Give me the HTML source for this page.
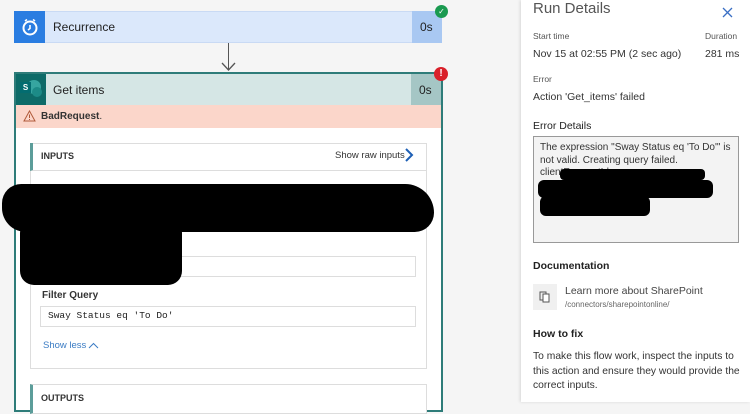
<!DOCTYPE html>
<html><head><style>
*{margin:0;padding:0;box-sizing:border-box}
body{width:750px;height:402px;overflow:hidden;background:#f5f5f5;font-family:"Liberation Sans",sans-serif;position:relative;color:#222}
.a{position:absolute}
.r{font-family:"Liberation Sans",sans-serif}
</style></head><body>
<div class="a" style="left:14px;top:11px;width:428px;height:32px;background:#dbe8fb;border:1px solid #c9daf4"></div>
<div class="a" style="left:14px;top:11px;width:31px;height:32px;background:#2a7de1"></div>
<svg class="a" style="left:20px;top:17px" width="20" height="20" viewBox="0 0 20 20"><circle cx="10" cy="11" r="6.5" fill="none" stroke="#fff" stroke-width="2"/><path d="M10 8v3.5l-2 1.5" stroke="#fff" stroke-width="1.6" fill="none"/><path d="M5 4l2-1.5M15 4l-2-1.5" stroke="#fff" stroke-width="1.6"/></svg>
<div class="a" style="left:53px;top:20px;font-size:12px">Recurrence</div>
<div class="a" style="left:412px;top:11px;width:30px;height:32px;background:#a9c8f2;font-size:12px;padding:9px 0 0 8px">0s</div>
<div class="a" style="left:435px;top:5px;width:13px;height:13px;border-radius:50%;background:#1a9a50;color:#fff;font-size:8px;text-align:center;line-height:13px">✓</div>
<div class="a" style="left:228px;top:43px;width:1px;height:27px;background:#555"></div>
<svg class="a" style="left:221px;top:62px" width="15" height="10"><path d="M1 1l6.5 7 6.5-7" stroke="#555" stroke-width="1.3" fill="none"/></svg>
<div class="a" style="left:14px;top:72px;width:429px;height:340px;background:#fff;border:2px solid #2e7c79"></div>
<div class="a" style="left:16px;top:74px;width:425px;height:31px;background:#d5e6e5"></div>
<div class="a" style="left:16px;top:74px;width:30px;height:31px;background:#0d6b68"></div>
<div class="a" style="left:27px;top:80px;width:14px;height:14px;border-radius:50%;background:#36a5a0"></div>
<div class="a" style="left:32px;top:87px;width:10px;height:10px;border-radius:50%;background:#1c8b87"></div>
<div class="a" style="left:20px;top:82px;width:11px;height:11px;background:#036c70;color:#fff;font-size:8px;font-weight:bold;text-align:center;line-height:11px">S</div>
<div class="a" style="left:53px;top:83px;font-size:12px">Get items</div>
<div class="a" style="left:411px;top:74px;width:30px;height:31px;background:#a5c6c5;font-size:12px;padding:9px 0 0 8px">0s</div>
<div class="a" style="left:434px;top:67px;width:14px;height:14px;border-radius:50%;background:#d9202a;color:#fff;font-size:10px;font-weight:bold;text-align:center;line-height:14px">!</div>
<div class="a" style="left:16px;top:105px;width:425px;height:23px;background:#fbd6ca"></div>
<svg class="a" style="left:23px;top:110px" width="13" height="12"><path d="M6.5 1L12 11H1z" fill="none" stroke="#b05a3a"/><path d="M6.5 4.5v3.5M6.5 9v1" stroke="#b05a3a"/></svg>
<div class="a" style="left:41px;top:111px;font-size:10px;font-weight:bold;color:#333">BadRequest<span style="font-weight:normal">.</span></div>
<div class="a" style="left:30px;top:143px;width:397px;height:226px;border:1px solid #ddd;background:#fff"></div>
<div class="a" style="left:30px;top:143px;width:397px;height:28px;border-bottom:1px solid #ddd;border-left:3px solid #5c9d9a"></div>
<div class="a" style="left:41px;top:151px;font-size:9px;font-weight:bold;color:#333">INPUTS</div>
<div class="a" style="left:335px;top:150px;font-size:9.5px;color:#333">Show raw inputs</div>
<svg class="a" style="left:404px;top:148px" width="10" height="14"><path d="M2 1l6 6-6 6" stroke="#1d5fb5" stroke-width="2" fill="none"/></svg>
<div class="a" style="left:40px;top:256px;width:376px;height:21px;border:1px solid #ddd"></div>
<div class="a" style="left:2px;top:184px;width:432px;height:48px;background:#000;border-radius:20px 30px 20px 25px"></div>
<div class="a" style="left:20px;top:225px;width:162px;height:60px;background:#000;border-radius:8px 8px 14px 14px"></div>
<div class="a" style="left:42px;top:290px;font-size:10px;font-weight:bold;color:#333">Filter Query</div>
<div class="a" style="left:40px;top:306px;width:376px;height:21px;border:1px solid #ddd;font-family:'Liberation Mono',monospace;font-size:9.5px;padding:3px 7px;color:#222">Sway Status eq 'To Do'</div>
<div class="a" style="left:43px;top:340px;font-size:9.5px;color:#3b7cc4">Show less</div>
<svg class="a" style="left:88px;top:341px" width="11" height="8"><path d="M1 7l4.5-4.5L10 7" stroke="#3b7cc4" fill="none"/></svg>
<div class="a" style="left:30px;top:384px;width:397px;height:30px;border:1px solid #ddd;border-left:3px solid #5c9d9a;background:#fff"></div>
<div class="a" style="left:41px;top:393px;font-size:9px;font-weight:bold;color:#333">OUTPUTS</div>
<div class="a r" style="left:521px;top:0;width:229px;height:402px;background:#fff;box-shadow:-1px 0 3px rgba(0,0,0,.12)"></div>
<div class="a r" style="left:533px;top:0px;font-size:15px;color:#555">Run Details</div>
<svg class="a" style="left:722px;top:7px" width="11" height="11"><path d="M1 1l9 9M10 1l-9 9" stroke="#3a6fc4" stroke-width="1.3"/></svg>
<div class="a r" style="left:533px;top:31px;font-size:8.5px;color:#555">Start time</div>
<div class="a r" style="left:705px;top:31px;font-size:8.5px;color:#555">Duration</div>
<div class="a r" style="left:533px;top:48px;font-size:10.5px;color:#333">Nov 15 at 02:55 PM (2 sec ago)</div>
<div class="a r" style="left:705px;top:48px;font-size:10.5px;color:#333">281 ms</div>
<div class="a r" style="left:533px;top:74px;font-size:8.5px;color:#555">Error</div>
<div class="a r" style="left:533px;top:91px;font-size:10.5px;color:#333">Action 'Get_items' failed</div>
<div class="a r" style="left:533px;top:120px;font-size:10.5px;color:#222">Error Details</div>
<div class="a r" style="left:533px;top:136px;width:206px;height:107px;background:#f3f3f3;border:1px solid #999;font-size:10px;line-height:12.5px;padding:5px 6px;color:#333">The expression "Sway Status eq 'To Do'" is not valid. Creating query failed. clientRequestId:</div>
<div class="a" style="left:560px;top:169px;width:145px;height:11px;background:#000;border-radius:4px"></div>
<div class="a" style="left:538px;top:180px;width:175px;height:18px;background:#000;border-radius:6px"></div>
<div class="a" style="left:540px;top:196px;width:110px;height:20px;background:#000;border-radius:6px"></div>
<div class="a r" style="left:533px;top:260px;font-size:10.5px;font-weight:bold;color:#222">Documentation</div>
<div class="a" style="left:533px;top:284px;width:24px;height:26px;background:#f0f0f0"></div>
<svg class="a" style="left:539px;top:291px" width="12" height="12"><rect x="1" y="1" width="6" height="8" fill="none" stroke="#555"/><rect x="4" y="3" width="6" height="8" fill="#fff" stroke="#555"/></svg>
<div class="a r" style="left:565px;top:285px;font-size:10.5px;color:#444">Learn more about SharePoint</div>
<div class="a r" style="left:565px;top:300px;font-size:8px;color:#666">/connectors/sharepointonline/</div>
<div class="a r" style="left:533px;top:328px;font-size:10.5px;font-weight:bold;color:#222">How to fix</div>
<div class="a r" style="left:533px;top:350px;width:212px;font-size:10.3px;line-height:14.5px;color:#333">To make this flow work, inspect the inputs to this action and ensure they would provide the correct inputs.</div>
</body></html>
